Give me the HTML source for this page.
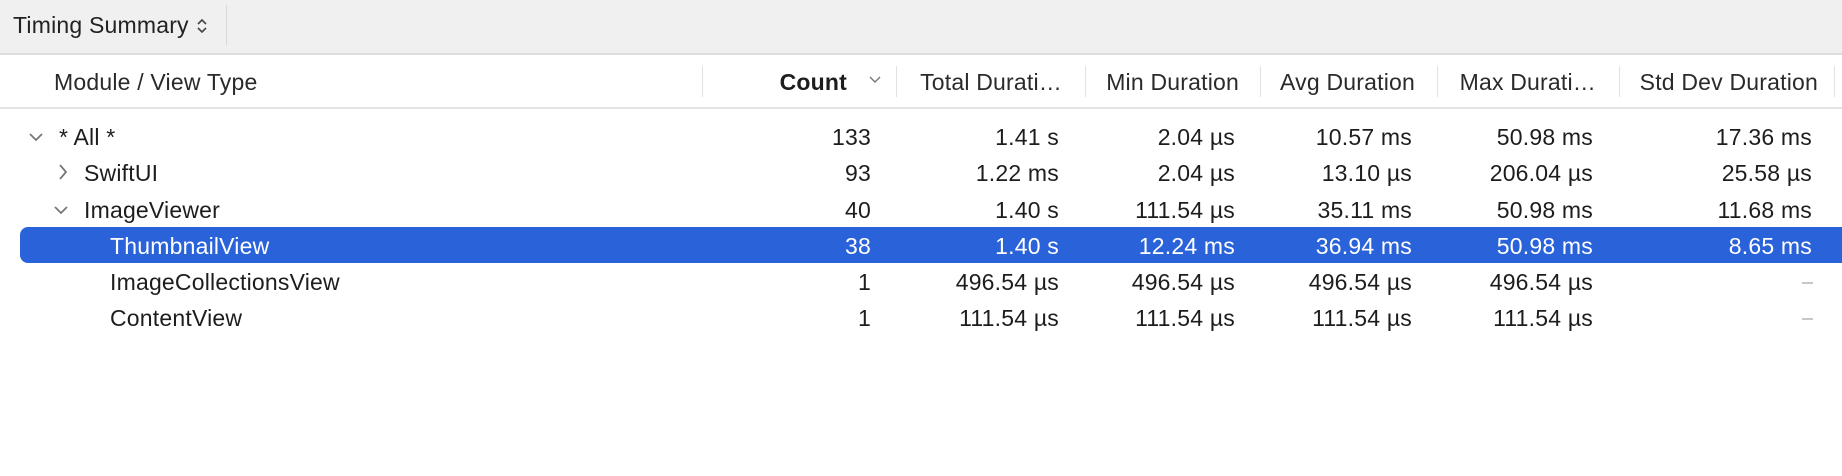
<!DOCTYPE html>
<html><head><meta charset="utf-8"><style>
body{margin:0;width:1842px;height:476px;background:#fff;font-family:"Liberation Sans",sans-serif;color:#1d1d1f;position:relative;overflow:hidden}
.tb{position:absolute;left:0;top:0;width:1842px;height:53px;background:#f0f0f0;border-bottom:2px solid #dedede}
.t{position:absolute;white-space:nowrap;font-size:23px;line-height:26px;letter-spacing:0.2px}
.r{text-align:right}
.sep{position:absolute;top:66px;height:31px;width:1px;background:#e2e2e2}
.hl{position:absolute;left:0;top:107px;width:1842px;height:2px;background:#e4e4e4}
.sel{position:absolute;left:20px;top:227px;width:1840px;height:36px;background:#2a63d9;border-radius:8px}
.w{color:#fff}
.chev{position:absolute}
</style></head><body>
<div class="tb"></div>
<div class="t" style="left:13px;top:12px;color:#222">Timing Summary</div>
<svg class="chev" style="left:196px;top:17px" width="12" height="18" viewBox="0 0 12 18"><path d="M2 7 L6 3 L10 7 M2 11 L6 15 L10 11" fill="none" stroke="#444" stroke-width="1.6"/></svg>
<div style="position:absolute;left:226px;top:5px;width:1px;height:40px;background:#d8d8d8"></div>

<div class="t" style="left:54px;top:69px;color:#2a2a2a">Module / View Type</div>
<div class="sep" style="left:702px"></div>
<div class="t r" style="right:995px;top:69px;font-weight:bold">Count</div>
<svg class="chev" style="left:869px;top:76px" width="12" height="8" viewBox="0 0 12 8"><path d="M1 1 L6 6 L11 1" fill="none" stroke="#777" stroke-width="1.4"/></svg>
<div class="sep" style="left:896px"></div>
<div class="t r" style="right:780px;top:69px;color:#2a2a2a">Total Durati…</div>
<div class="sep" style="left:1085px"></div>
<div class="t r" style="right:603px;top:69px;color:#2a2a2a">Min Duration</div>
<div class="sep" style="left:1260px"></div>
<div class="t r" style="right:427px;top:69px;color:#2a2a2a">Avg Duration</div>
<div class="sep" style="left:1437px"></div>
<div class="t r" style="right:246px;top:69px;color:#2a2a2a">Max Durati…</div>
<div class="sep" style="left:1619px"></div>
<div class="t r" style="right:24px;top:69px;color:#2a2a2a">Std Dev Duration</div>
<div class="sep" style="left:1834px"></div>
<div class="hl"></div>

<div class="sel"></div>

<svg class="chev" style="left:29px;top:133px" width="14" height="9" viewBox="0 0 14 9"><path d="M1 1 L7 7 L13 1" fill="none" stroke="#777" stroke-width="1.8"/></svg>
<svg class="chev" style="left:59px;top:164px" width="9" height="16" viewBox="0 0 9 16"><path d="M1 1 L7 8 L1 15" fill="none" stroke="#777" stroke-width="1.8"/></svg>
<svg class="chev" style="left:54px;top:206px" width="14" height="9" viewBox="0 0 14 9"><path d="M1 1 L7 7 L13 1" fill="none" stroke="#777" stroke-width="1.8"/></svg>

<div class="t" style="left:59px;top:124px">* All *</div>
<div class="t" style="left:84px;top:160px">SwiftUI</div>
<div class="t" style="left:84px;top:197px">ImageViewer</div>
<div class="t w" style="left:110px;top:233px">ThumbnailView</div>
<div class="t" style="left:110px;top:269px">ImageCollectionsView</div>
<div class="t" style="left:110px;top:305px">ContentView</div>

<div class="t r" style="right:971px;top:124px">133</div>
<div class="t r" style="right:783px;top:124px">1.41 s</div>
<div class="t r" style="right:607px;top:124px">2.04 µs</div>
<div class="t r" style="right:430px;top:124px">10.57 ms</div>
<div class="t r" style="right:249px;top:124px">50.98 ms</div>
<div class="t r" style="right:30px;top:124px">17.36 ms</div>

<div class="t r" style="right:971px;top:160px">93</div>
<div class="t r" style="right:783px;top:160px">1.22 ms</div>
<div class="t r" style="right:607px;top:160px">2.04 µs</div>
<div class="t r" style="right:430px;top:160px">13.10 µs</div>
<div class="t r" style="right:249px;top:160px">206.04 µs</div>
<div class="t r" style="right:30px;top:160px">25.58 µs</div>

<div class="t r" style="right:971px;top:197px">40</div>
<div class="t r" style="right:783px;top:197px">1.40 s</div>
<div class="t r" style="right:607px;top:197px">111.54 µs</div>
<div class="t r" style="right:430px;top:197px">35.11 ms</div>
<div class="t r" style="right:249px;top:197px">50.98 ms</div>
<div class="t r" style="right:30px;top:197px">11.68 ms</div>

<div class="t r w" style="right:971px;top:233px">38</div>
<div class="t r w" style="right:783px;top:233px">1.40 s</div>
<div class="t r w" style="right:607px;top:233px">12.24 ms</div>
<div class="t r w" style="right:430px;top:233px">36.94 ms</div>
<div class="t r w" style="right:249px;top:233px">50.98 ms</div>
<div class="t r w" style="right:30px;top:233px">8.65 ms</div>

<div class="t r" style="right:971px;top:269px">1</div>
<div class="t r" style="right:783px;top:269px">496.54 µs</div>
<div class="t r" style="right:607px;top:269px">496.54 µs</div>
<div class="t r" style="right:430px;top:269px">496.54 µs</div>
<div class="t r" style="right:249px;top:269px">496.54 µs</div>
<div style="position:absolute;left:1802px;top:282px;width:11px;height:2px;background:#c8c8c8"></div>

<div class="t r" style="right:971px;top:305px">1</div>
<div class="t r" style="right:783px;top:305px">111.54 µs</div>
<div class="t r" style="right:607px;top:305px">111.54 µs</div>
<div class="t r" style="right:430px;top:305px">111.54 µs</div>
<div class="t r" style="right:249px;top:305px">111.54 µs</div>
<div style="position:absolute;left:1802px;top:318px;width:11px;height:2px;background:#c8c8c8"></div>
</body></html>
